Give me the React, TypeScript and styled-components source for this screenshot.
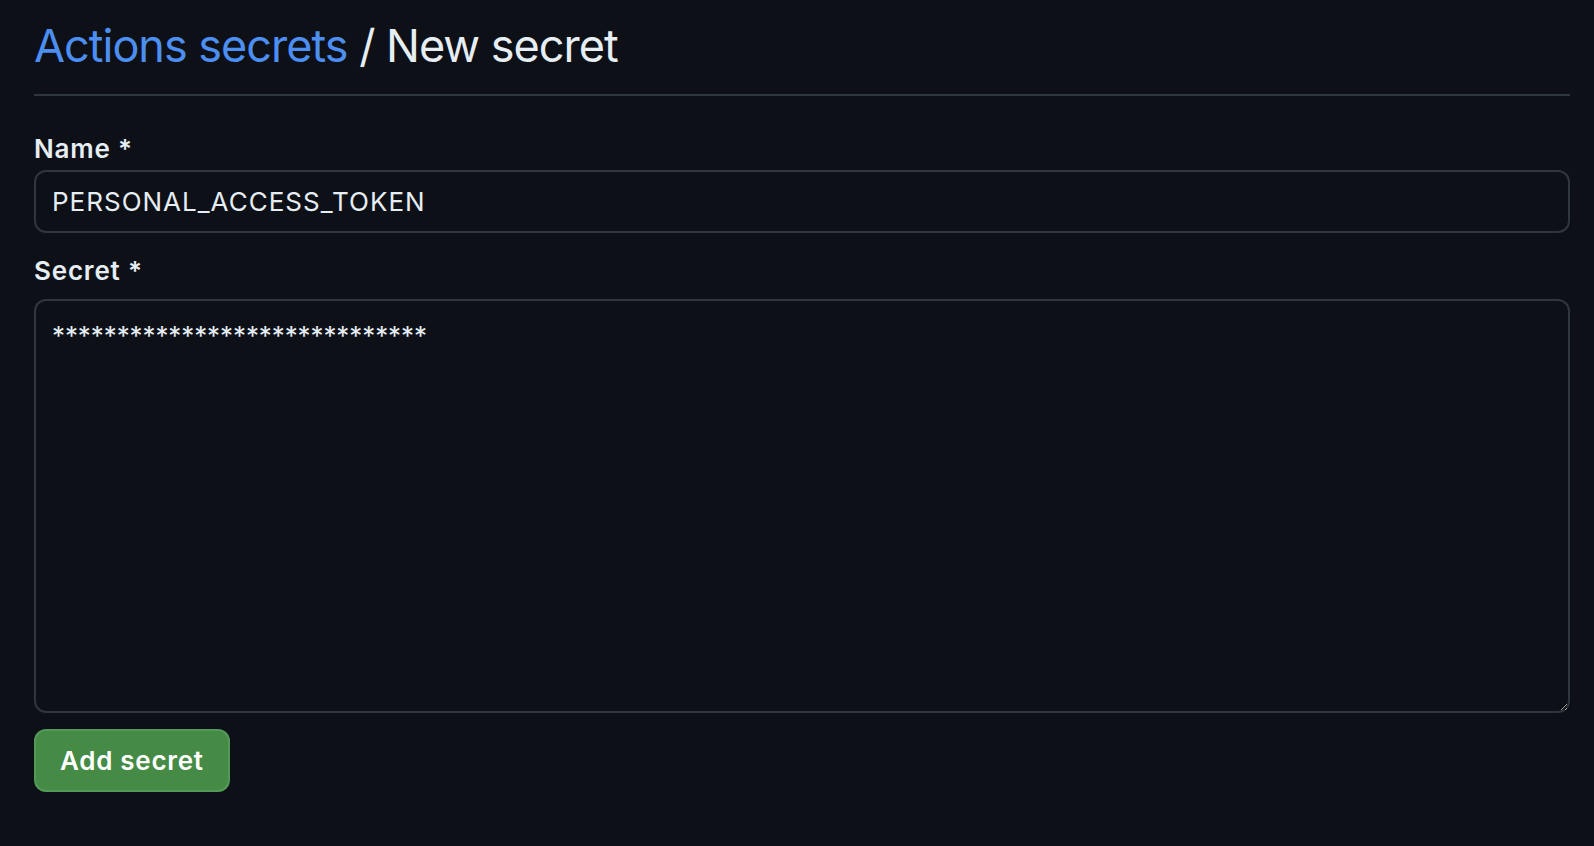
import styled, { createGlobalStyle } from "styled-components"

const GlobalStyle = createGlobalStyle`
  html, body {
    margin: 0;
    padding: 0;
    background-color: #0d1117;
  }

  body {
    font-family: Inter, "Noto Sans", "Liberation Sans", sans-serif;
    color: #e6edf3;
  }
`

const Page = styled.div`
  width: 1594px;
  height: 846px;
  box-sizing: border-box;
  padding: 16px 24px 0 34px;
  display: flex;
  flex-direction: column;
`

const Subhead = styled.div`
  padding-bottom: 18px;
  border-bottom: 2px solid #30363d;
  margin-bottom: 37px;
`

const Title = styled.h2`
  margin: 0;
  font-size: 45px;
  font-weight: 400;
  line-height: 60px;
  letter-spacing: -1px;
  color: #e6edf3;
`

const Crumb = styled.a`
  color: #4c8ef2;
  text-decoration: none;
`

const Field = styled.div<{ $gap: number }>`
  display: flex;
  flex-direction: column;
  gap: ${({ $gap }) => $gap}px;
  margin-bottom: 22px;
`

const Label = styled.label`
  font-size: 26px;
  font-weight: 600;
  line-height: 32px;
  letter-spacing: 0.8px;
  color: #e6edf3;
`

const TextInput = styled.input`
  box-sizing: border-box;
  width: 100%;
  height: 63px;
  padding: 0 16px;
  background-color: #0d1117;
  border: 2px solid #30363d;
  border-radius: 12px;
  color: #e6edf3;
  font-family: inherit;
  font-size: 26px;
  letter-spacing: 1px;
  outline: none;
`

const TextArea = styled.textarea`
  box-sizing: border-box;
  width: 100%;
  height: 414px;
  padding: 19px 16px;
  background-color: #0d1117;
  border: 2px solid #30363d;
  border-radius: 12px;
  color: #e6edf3;
  font-family: inherit;
  font-size: 26px;
  line-height: 32px;
  letter-spacing: -0.1px;
  outline: none;
  resize: vertical;
`

const PrimaryButton = styled.button`
  align-self: flex-start;
  height: 63px;
  padding: 0 24px;
  margin-top: -6px;
  background-color: #458b46;
  border: 2px solid #52995a;
  border-radius: 12px;
  color: #ffffff;
  font-family: inherit;
  font-size: 26px;
  font-weight: 600;
  letter-spacing: 0.7px;
  cursor: pointer;
`

export default function App() {
  return (
    <>
      <GlobalStyle />
      <Page>
        <Subhead>
          <Title>
            <Crumb href="#">Actions secrets</Crumb> / New secret
          </Title>
        </Subhead>
        <Field $gap={5}>
          <Label htmlFor="secret-name">Name *</Label>
          <TextInput id="secret-name" defaultValue="PERSONAL_ACCESS_TOKEN" />
        </Field>
        <Field $gap={12}>
          <Label htmlFor="secret-value">Secret *</Label>
          <TextArea id="secret-value" defaultValue={"*".repeat(29)} />
        </Field>
        <PrimaryButton>Add secret</PrimaryButton>
      </Page>
    </>
  )
}
